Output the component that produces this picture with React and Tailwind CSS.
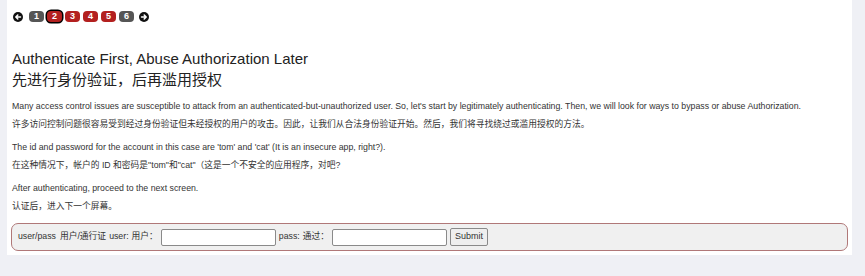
const font = { fontFamily: '"Liberation Sans", "Noto Sans CJK SC", Arial, sans-serif' }

function Arrow({ dir }) {
  return (
    <svg width="10" height="10" viewBox="0 0 10 10" className="shrink-0">
      <circle cx="5" cy="5" r="5" fill="#111" />
      {dir === 'left' ? (
        <path d="M7.5 5H3M4.8 3L2.8 5l2 2" stroke="#fff" strokeWidth="1.5" fill="none" strokeLinecap="round" strokeLinejoin="round" />
      ) : (
        <path d="M2.5 5H7M5.2 3l2 2-2 2" stroke="#fff" strokeWidth="1.5" fill="none" strokeLinecap="round" strokeLinejoin="round" />
      )}
    </svg>
  )
}

const pages = [
  { n: 1, c: 'bg-[#555555]' },
  { n: 2, c: 'bg-[#b3201f] ring-[1.5px] ring-black' },
  { n: 3, c: 'bg-[#b3201f]' },
  { n: 4, c: 'bg-[#b3201f]' },
  { n: 5, c: 'bg-[#b3201f]' },
  { n: 6, c: 'bg-[#555555]' },
]

export default function App() {
  return (
    <div className="h-[276px] w-[865px] overflow-hidden bg-[#eff0f5] text-[#333]" style={font}>
      <div className="ml-[7px] h-[255px] w-[845px] bg-white px-[4px] pt-[11px]">
        <div className="flex items-center gap-[5px] pl-[2px]">
          <Arrow dir="left" />
          <div className="ml-[1px] flex gap-[3px]">
            {pages.map((p) => (
              <span
                key={p.n}
                className={`grid h-[11px] w-[15px] place-items-center rounded-[4px] text-[9px] font-bold leading-none text-white ${p.c}`}
              >
                {p.n}
              </span>
            ))}
          </div>
          <Arrow dir="right" />
        </div>

        <h2 className="mt-[26px] pl-[1px] text-[15px] leading-[21px] font-normal text-[#222]">
          Authenticate First, Abuse Authorization Later
          <br />
          先进行身份验证，后再滥用授权
        </h2>

        <div className="mt-[7px] pl-[1px] text-[8.75px] leading-[18px]">
          <p className="mb-[5px]">
            Many access control issues are susceptible to attack from an authenticated-but-unauthorized user. So, let's start by legitimately authenticating. Then, we will look for ways to bypass or abuse Authorization.
            <br />
            许多访问控制问题很容易受到经过身份验证但未经授权的用户的攻击。因此，让我们从合法身份验证开始。然后，我们将寻找绕过或滥用授权的方法。
          </p>
          <p className="mb-[5px]">
            The id and password for the account in this case are 'tom' and 'cat' (It is an insecure app, right?).
            <br />
            在这种情况下，帐户的 ID 和密码是"tom"和"cat"（这是一个不安全的应用程序，对吧?
          </p>
          <p>
            After authenticating, proceed to the next screen.
            <br />
            认证后，进入下一个屏幕。
          </p>
        </div>

        <form
          className="mt-[8px] flex h-[28px] items-center gap-[3px] rounded-[7px] border border-[#b07878] bg-[#f0f0f0] pl-[6px] text-[8.75px]"
          onSubmit={(e) => e.preventDefault()}
        >
          <span>user/pass</span>
          <span className="ml-[1px]">用户/通行证</span>
          <span>user:</span>
          <span>用户：</span>
          <input className="h-[17px] w-[115px] rounded-[2px] border border-[#8a8a8a] bg-white" />
          <span>pass:</span>
          <span>通过：</span>
          <input className="h-[17px] w-[115px] rounded-[2px] border border-[#8a8a8a] bg-white" />
          <button className="h-[18px] rounded-[2px] border border-[#8a8a8a] bg-[#efefef] px-[4px] text-[9px] text-[#333]">
            Submit
          </button>
        </form>
      </div>
    </div>
  )
}
